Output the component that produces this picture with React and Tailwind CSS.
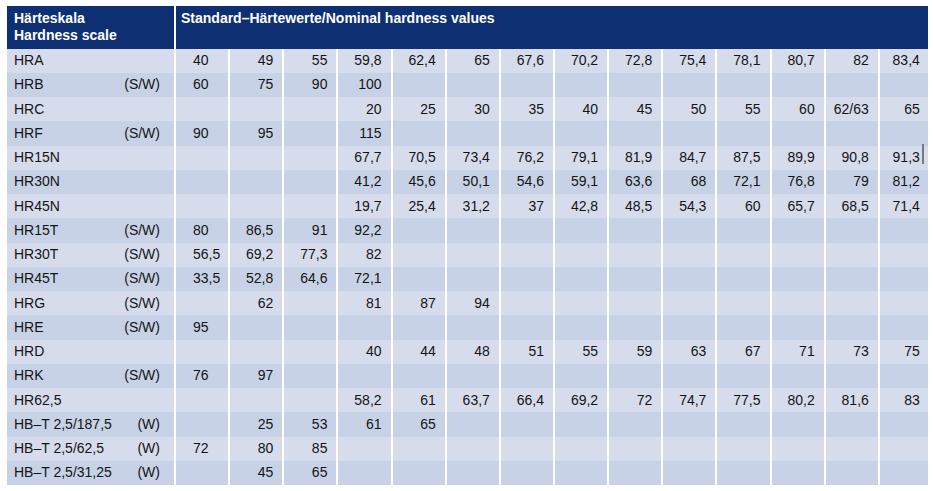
import React from "react";

const rows = [
  ["HRA", "", ["40", "49", "55", "59,8", "62,4", "65", "67,6", "70,2", "72,8", "75,4", "78,1", "80,7", "82", "83,4"]],
  ["HRB", "(S/W)", ["60", "75", "90", "100"]],
  ["HRC", "", ["", "", "", "20", "25", "30", "35", "40", "45", "50", "55", "60", "62/63", "65"]],
  ["HRF", "(S/W)", ["90", "95", "", "115"]],
  ["HR15N", "", ["", "", "", "67,7", "70,5", "73,4", "76,2", "79,1", "81,9", "84,7", "87,5", "89,9", "90,8", "91,3"]],
  ["HR30N", "", ["", "", "", "41,2", "45,6", "50,1", "54,6", "59,1", "63,6", "68", "72,1", "76,8", "79", "81,2"]],
  ["HR45N", "", ["", "", "", "19,7", "25,4", "31,2", "37", "42,8", "48,5", "54,3", "60", "65,7", "68,5", "71,4"]],
  ["HR15T", "(S/W)", ["80", "86,5", "91", "92,2"]],
  ["HR30T", "(S/W)", ["56,5", "69,2", "77,3", "82"]],
  ["HR45T", "(S/W)", ["33,5", "52,8", "64,6", "72,1"]],
  ["HRG", "(S/W)", ["", "62", "", "81", "87", "94"]],
  ["HRE", "(S/W)", ["95"]],
  ["HRD", "", ["", "", "", "40", "44", "48", "51", "55", "59", "63", "67", "71", "73", "75"]],
  ["HRK", "(S/W)", ["76", "97"]],
  ["HR62,5", "", ["", "", "", "58,2", "61", "63,7", "66,4", "69,2", "72", "74,7", "77,5", "80,2", "81,6", "83"]],
  ["HB–T 2,5/187,5", "(W)", ["", "25", "53", "61", "65"]],
  ["HB–T 2,5/62,5", "(W)", ["72", "80", "85"]],
  ["HB–T 2,5/31,25", "(W)", ["", "45", "65"]],
];

export default function App() {
  return (
    <div
      className="w-[933px] h-[491px] bg-white pl-[7px] pt-[6px] text-[14px] text-[#141414] overflow-hidden"
      style={{ fontFamily: '"Liberation Sans", Arial, sans-serif' }}
    >
      <div className="grid grid-cols-[167px_repeat(13,52.15px)_48px] gap-x-[2px] bg-white w-max">
        <div className="h-[42.5px] bg-[#0e2f72] text-white font-bold leading-[17px] pl-[7px] pt-[4px]">
          <div>Härteskala</div>
          <div>Hardness scale</div>
        </div>
        <div className="col-span-14 h-[42.5px] bg-[#0e2f72] text-white font-bold leading-[17px] pl-[5px] pt-[4px]">
          Standard–Härtewerte/Nominal hardness values
        </div>
        {rows.map(([label, sub, vals], ri) => {
          const bg = ri % 2 === 0 ? "bg-[#d6dcec]" : "bg-[#c7d2e6]";
          const cells = Array.from({ length: 14 }, (_, i) => vals[i] || "");
          return (
            <React.Fragment key={ri}>
              <div className={`${bg} h-[24.25px] flex items-center justify-between pl-[7px] pr-[14px] whitespace-nowrap`}>
                <span>{label}</span>
                <span>{sub}</span>
              </div>
              {cells.map((v, ci) => (
                <div
                  key={ci}
                  className={`${bg} h-[24.25px] flex items-center relative whitespace-nowrap ${
                    ci === 0 ? "justify-start pl-[17px]" : ci === 13 ? "justify-end pr-[8px]" : "justify-end pr-[9px]"
                  }`}
                >
                  {v}
                  {ri === 4 && ci === 13 ? (
                    <span className="absolute right-[4px] top-[-2px] h-[20px] w-[1.5px] bg-[#7a7a7a]" />
                  ) : null}
                </div>
              ))}
            </React.Fragment>
          );
        })}
      </div>
    </div>
  );
}
